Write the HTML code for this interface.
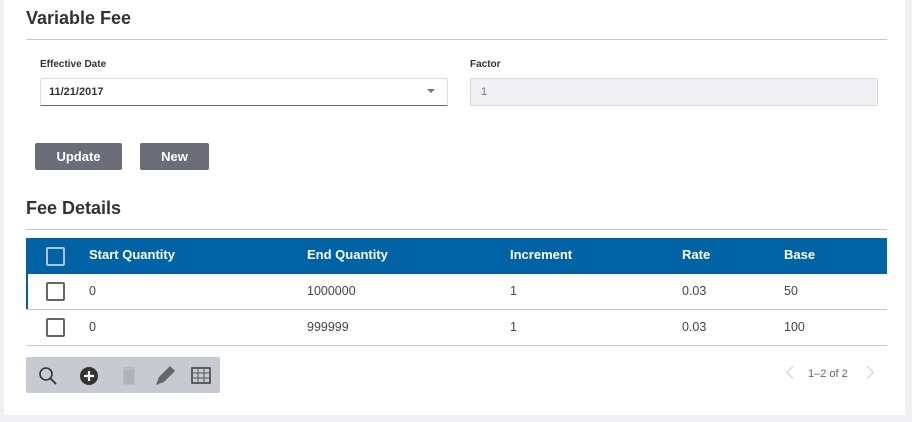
<!DOCTYPE html>
<html><head><style>
*{box-sizing:border-box;margin:0;padding:0}
body{width:912px;height:422px;background:#f0f0f5;font-family:"Liberation Sans",sans-serif;position:relative;overflow:hidden;color:#333}
.card{position:absolute;left:4px;top:0;width:901px;height:415px;background:#fff}
.a{position:absolute}
h1{position:absolute;font-size:18px;font-weight:bold;color:#333}
.hr{position:absolute;left:26px;width:861px;height:1px;background:#c8c8c8}
.lbl{position:absolute;font-size:10px;font-weight:bold;color:#333}
.btn{position:absolute;top:143px;height:27px;background:#6b6e78;color:#fff;font-size:13px;font-weight:bold;text-align:center;line-height:27px;border-radius:2px}
.th{position:absolute;top:238px;left:26px;width:861px;height:36px;background:#0063a5}
.t{position:absolute;font-size:13px}
.hd{color:#fff;font-weight:bold;top:247px}
.cb{position:absolute;left:46px;width:19px;height:19px;border:2px solid #666;border-radius:2px}
.row{color:#444;font-size:12.5px}
</style></head><body>
<div class="card"></div>
<h1 style="left:26px;top:8px">Variable Fee</h1>
<div class="hr" style="top:39px"></div>
<div class="lbl" style="left:40px;top:59px">Effective Date</div>
<div class="a" style="left:40px;top:78px;width:408px;height:28px;border:1px solid #ddd;border-bottom:1px solid #666;border-radius:2px 2px 0 0"></div>
<div class="t" style="left:49px;top:86px;font-size:11px;font-weight:bold">11/21/2017</div>
<div class="a" style="left:427px;top:89px;width:0;height:0;border-left:4px solid transparent;border-right:4px solid transparent;border-top:4px solid #777"></div>
<div class="lbl" style="left:470px;top:59px">Factor</div>
<div class="a" style="left:470px;top:78px;width:408px;height:28px;background:#f0f0f5;border:1px solid #d8d8dc;border-radius:2px"></div>
<div class="t" style="left:481px;top:86px;font-size:11px;color:#777">1</div>
<div class="btn" style="left:35px;width:87px">Update</div>
<div class="btn" style="left:140px;width:69px">New</div>
<h1 style="left:26px;top:198px">Fee Details</h1>
<div class="hr" style="top:229px"></div>
<div class="th"></div>
<div class="cb" style="top:247px;border-color:#a9c6de"></div>
<div class="t hd" style="left:89px">Start Quantity</div>
<div class="t hd" style="left:307px">End Quantity</div>
<div class="t hd" style="left:510px">Increment</div>
<div class="t hd" style="left:682px">Rate</div>
<div class="t hd" style="left:784px">Base</div>
<div class="a" style="left:26px;top:274px;width:2px;height:35px;background:#0063a5"></div>
<div class="hr" style="top:309px"></div>
<div class="hr" style="top:345px"></div>
<div class="cb" style="top:282px"></div>
<div class="cb" style="top:318px"></div>
<div class="t row" style="left:89px;top:284px">0</div>
<div class="t row" style="left:307px;top:284px">1000000</div>
<div class="t row" style="left:510px;top:284px">1</div>
<div class="t row" style="left:682px;top:284px">0.03</div>
<div class="t row" style="left:784px;top:284px">50</div>
<div class="t row" style="left:89px;top:320px">0</div>
<div class="t row" style="left:307px;top:320px">999999</div>
<div class="t row" style="left:510px;top:320px">1</div>
<div class="t row" style="left:682px;top:320px">0.03</div>
<div class="t row" style="left:784px;top:320px">100</div>
<div class="a" style="left:26px;top:357px;width:194px;height:36px;background:#c8cad2;border-radius:2px"></div>
<svg class="a" style="left:26px;top:357px" width="194" height="36">
<circle cx="20" cy="17" r="6" fill="none" stroke="#333" stroke-width="1.6"/>
<line x1="24.5" y1="21.5" x2="30" y2="27" stroke="#333" stroke-width="1.8"/>
<circle cx="63" cy="19" r="9" fill="#333"/>
<path d="M58 19h10M63 14v10" stroke="#fff" stroke-width="2.2"/>
<path d="M97 11h12M101 10h4M98 13h10v14h-10z" fill="#b0b2ba" stroke="#b0b2ba" stroke-width="1"/>
<path d="M130 28l3-8 11-11 5 5-11 11z" fill="#666"/>
<rect x="166" y="11" width="18" height="15" fill="none" stroke="#444" stroke-width="1.6"/>
<path d="M166 16h18M166 21h18M172 11v15M178 11v15" stroke="#555" stroke-width="1"/>
</svg>
<div class="a" style="left:788px;top:368px;width:9px;height:9px;border-left:1.5px solid #ccc;border-bottom:1.5px solid #ccc;transform:rotate(45deg)"></div>
<div class="t" style="left:808px;top:368px;font-size:11px;color:#666">1–2 of 2</div>
<div class="a" style="left:863px;top:368px;width:9px;height:9px;border-right:1.5px solid #ccc;border-top:1.5px solid #ccc;transform:rotate(45deg)"></div>
</body></html>
